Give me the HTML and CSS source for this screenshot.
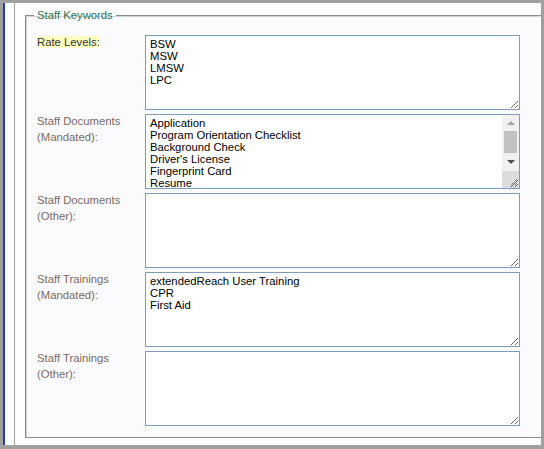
FILE: index.html
```html
<!DOCTYPE html>
<html>
<head>
<meta charset="utf-8">
<link rel="stylesheet" href="styles.css">
</head>
<body>
<div class="window">
  <div class="stripe"></div>
  <div class="gutter"></div>
  <div class="sep"></div>
  <div class="panel">
    <fieldset class="group">
      <legend class="group-title">Staff Keywords</legend>
      <div class="rows">
        <div class="label"><span class="required">Rate Levels:</span></div>
        <textarea class="box">BSW
MSW
LMSW
LPC</textarea>

        <div class="label">Staff Documents<br>(Mandated):</div>
        <div class="box scrollbox">
          <div class="scroll-content">Application<br>Program Orientation Checklist<br>Background Check<br>Driver's License<br>Fingerprint Card<br>Resume</div>
          <div class="scrollbar">
            <div class="arrow arrow-up"></div>
            <div class="thumb"></div>
            <div class="arrow arrow-down"></div>
            <div class="spacer"></div>
            <div class="corner">
              <svg width="17" height="17" viewBox="0 0 17 17"><path d="M15 8 L8 15 M15 12 L12 15" stroke="#555" stroke-width="1" stroke-dasharray="1 1" fill="none"/></svg>
            </div>
          </div>
        </div>

        <div class="label">Staff Documents<br>(Other):</div>
        <textarea class="box"></textarea>

        <div class="label">Staff Trainings<br>(Mandated):</div>
        <textarea class="box">extendedReach User Training
CPR
First Aid</textarea>

        <div class="label">Staff Trainings<br>(Other):</div>
        <textarea class="box"></textarea>
      </div>
    </fieldset>
  </div>
</div>
</body>
</html>
```

FILE: styles.css
```css
html, body {
  margin: 0;
  padding: 0;
  background: #ffffff;
}

.window {
  width: 544px;
  height: 449px;
  box-sizing: border-box;
  border: 3px solid #a0a0a0;
  border-bottom-width: 4px;
  display: flex;
  overflow: hidden;
  font-family: "Liberation Sans", Arial, sans-serif;
  font-size: 11.3px;
}

.stripe {
  width: 2px;
  flex: 0 0 2px;
  background: #1d3fa6;
}

.gutter {
  width: 9px;
  flex: 0 0 9px;
  background: #ffffff;
}

.sep {
  width: 1px;
  flex: 0 0 1px;
  background: #a0a0a0;
}

.panel {
  flex: 1 1 auto;
  min-width: 0;
  overflow: hidden;
  background: #ffffff;
  padding: 6px 0 0 10px;
}

.group {
  width: 540px;
  margin: 0;
  padding: 13px 0 11px 11px;
  border: 1px solid #8a8a8a;
  box-shadow: inset 1px 1px 0 #d4d4d4;
  background: #fbfbfd;
  box-sizing: border-box;
}

.group-title {
  color: #2e7050;
  font-size: 11.3px;
  line-height: 13px;
  padding: 0 3px;
  margin-left: -3px;
}

.rows {
  display: grid;
  grid-template-columns: 108px 375px;
  grid-auto-rows: 75px;
  row-gap: 4px;
}

.label {
  color: #7a6a5c;
  line-height: 16px;
  margin-top: -1px;
}

.required {
  color: #333333;
  background: #ffffc4;
}

.box {
  box-sizing: border-box;
  width: 375px;
  height: 75px;
  margin: 0;
  border: 1px solid #7f9db9;
  background: #ffffff;
  color: #000000;
  font-family: "Liberation Sans", Arial, sans-serif;
  font-size: 11.3px;
  line-height: 12px;
  padding: 2px 4px;
  resize: vertical;
  overflow: hidden;
  outline: none;
}

.scrollbox {
  display: flex;
  padding: 0;
}

.scroll-content {
  flex: 1 1 auto;
  padding: 2px 4px;
  overflow: hidden;
  white-space: nowrap;
}

.scrollbar {
  flex: 0 0 17px;
  width: 17px;
  background: #f1f1f1;
  display: flex;
  flex-direction: column;
  align-items: center;
}

.arrow {
  width: 0;
  height: 0;
  border-left: 4px solid transparent;
  border-right: 4px solid transparent;
}

.arrow-up {
  margin-top: 6px;
  border-bottom: 4px solid #a3a3a3;
}

.thumb {
  margin-top: 6px;
  width: 13px;
  height: 22px;
  background: #c1c1c1;
}

.arrow-down {
  margin-top: 7px;
  border-top: 4px solid #505050;
}

.spacer {
  flex: 1 1 auto;
}

.corner {
  width: 17px;
  height: 17px;
  background: #dcdcdc;
}

.corner svg {
  display: block;
}
```
